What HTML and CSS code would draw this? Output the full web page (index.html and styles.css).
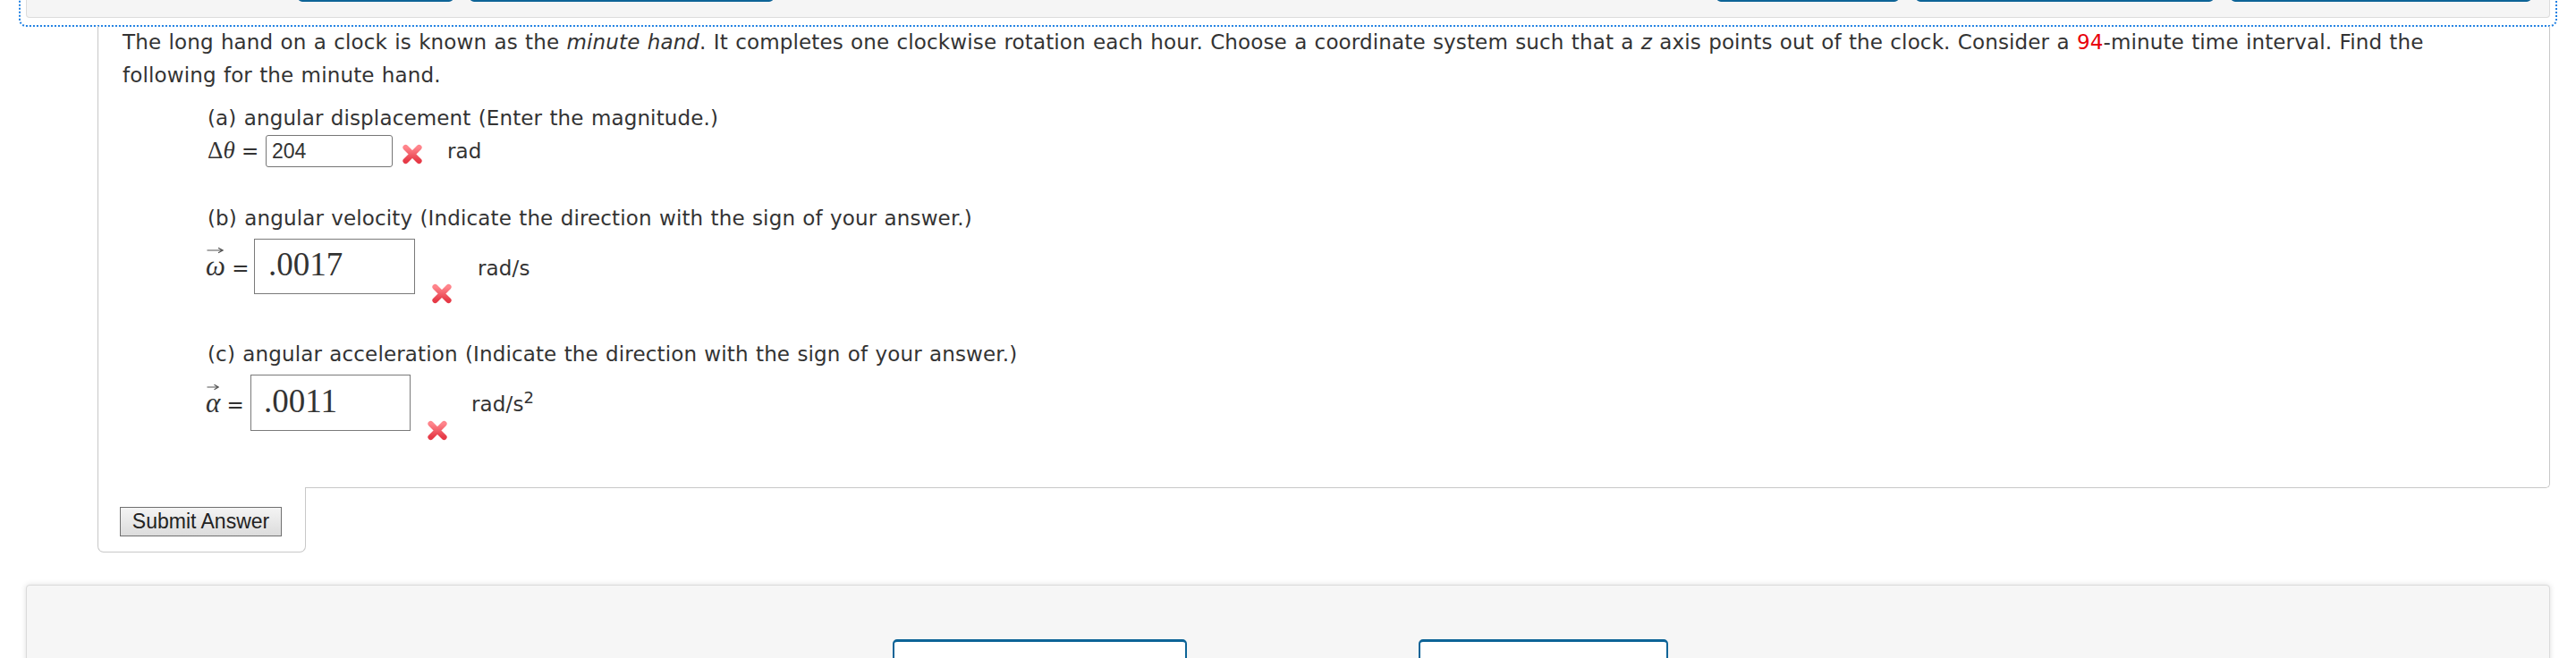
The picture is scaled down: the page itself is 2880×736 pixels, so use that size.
FILE: index.html
```html
<!DOCTYPE html>
<html lang="en">
<head>
<meta charset="utf-8">
<title>Minute hand question</title>
<link rel="stylesheet" href="styles.css">
</head>
<body>
<div class="page">
  <div class="focus-wrap">
    <div class="toolbar">
      <div class="tb-group tb-left">
        <span class="tb-btn w174"></span>
        <span class="tb-btn w340"></span>
      </div>
      <div class="tb-group tb-right">
        <span class="tb-btn w204"></span>
        <span class="tb-btn w333"></span>
        <span class="tb-btn w336"></span>
      </div>
    </div>
  </div>

  <div class="card">
    <p class="stem">The long hand on a clock is known as the <i>minute hand</i>. It completes one clockwise rotation each hour. Choose a coordinate system such that a <i>z</i> axis points out of the clock. Consider a <span class="red">94</span>-minute time interval. Find the following for the minute hand.</p>

    <div class="parts">
      <div class="part part-a">
        <div class="part-label">(a) angular displacement (Enter the magnitude.)</div>
        <div class="row row-a">
          <span class="lab lab-a"><span class="math"><span class="up">Δ</span><i>θ</i></span> =</span>
          <span class="inp inp-a">204</span>
          <svg class="xmark xm-a" viewBox="0 0 24 23" width="24" height="23" aria-hidden="true">
            <defs><linearGradient id="xg1" x1="0" y1="0" x2="0" y2="1"><stop offset="0" stop-color="#ff858c"/><stop offset="1" stop-color="#e63a47"/></linearGradient></defs>
            <path d="M4.5 4 L19.5 19 M19.5 4 L4.5 19" stroke="url(#xg1)" stroke-width="6.2" stroke-linecap="round"/>
          </svg>
          <span class="unit unit-a">rad</span>
        </div>
      </div>

      <div class="part part-b">
        <div class="part-label">(b) angular velocity (Indicate the direction with the sign of your answer.)</div>
        <div class="row row-b">
          <span class="lab lab-b"><span class="vec"><svg class="arrow arrow-w" viewBox="0 0 19 8" width="19" height="8" aria-hidden="true"><path d="M0.5 4 H17 M13 1.2 L18 4 L13 6.8" stroke="#555" stroke-width="1.2" fill="none"/></svg><i class="sym">ω</i></span> =</span>
          <span class="inp inp-b">.0017</span>
          <svg class="xmark xm-b" viewBox="0 0 24 23" width="24" height="23" aria-hidden="true">
            <defs><linearGradient id="xg2" x1="0" y1="0" x2="0" y2="1"><stop offset="0" stop-color="#ff858c"/><stop offset="1" stop-color="#e63a47"/></linearGradient></defs>
            <path d="M4.5 4 L19.5 19 M19.5 4 L4.5 19" stroke="url(#xg2)" stroke-width="6.2" stroke-linecap="round"/>
          </svg>
          <span class="unit unit-b">rad/s</span>
        </div>
      </div>

      <div class="part part-c">
        <div class="part-label">(c) angular acceleration (Indicate the direction with the sign of your answer.)</div>
        <div class="row row-c">
          <span class="lab lab-c"><span class="vec"><svg class="arrow arrow-a" viewBox="0 0 14 8" width="14" height="8" aria-hidden="true"><path d="M0.5 4 H12 M8.5 1.2 L13.2 4 L8.5 6.8" stroke="#555" stroke-width="1.2" fill="none"/></svg><i class="sym">α</i></span> =</span>
          <span class="inp inp-c">.0011</span>
          <svg class="xmark xm-c" viewBox="0 0 24 23" width="24" height="23" aria-hidden="true">
            <defs><linearGradient id="xg3" x1="0" y1="0" x2="0" y2="1"><stop offset="0" stop-color="#ff858c"/><stop offset="1" stop-color="#e63a47"/></linearGradient></defs>
            <path d="M4.5 4 L19.5 19 M19.5 4 L4.5 19" stroke="url(#xg3)" stroke-width="6.2" stroke-linecap="round"/>
          </svg>
          <span class="unit unit-c">rad/s<sup>2</sup></span>
        </div>
      </div>
    </div>
  </div>

  <div class="tab">
    <button class="submit" type="button">Submit Answer</button>
  </div>

  <div class="bottom-box">
    <span class="bb-btn bb1"></span>
    <span class="bb-btn bb2"></span>
  </div>
</div>
</body>
</html>
```

FILE: styles.css
```css
* { box-sizing: border-box; }

html, body {
  margin: 0;
  padding: 0;
  background: #ffffff;
  overflow: hidden;
}

body {
  font-family: "DejaVu Sans", Verdana, sans-serif;
  font-size: 23px;
  color: #333333;
}

.page {
  margin: 0 29px;
}

/* ---------- top toolbar with focus outline ---------- */
.focus-wrap {
  margin: -52px -8px 0;
  padding: 0 6px 8px;
  border: 2px dotted #1f80e2;
  border-radius: 0 0 8px 8px;
}

.toolbar {
  height: 70px;
  background: #f5f5f5;
  border: 1px solid #dcdcdc;
  border-top: none;
  border-radius: 0 0 4px 4px;
  display: flex;
  justify-content: space-between;
  padding: 0 20px 0 303px;
}

.tb-group {
  display: flex;
  align-items: flex-start;
}

.tb-left { gap: 18px; }
.tb-right { gap: 19px; }

.tb-btn {
  display: block;
  height: 40px;
  margin-top: 12px;
  background: #0d6497;
  border-radius: 5px;
}

.w174 { width: 174px; }
.w340 { width: 340px; }
.w204 { width: 204px; }
.w333 { width: 333px; }
.w336 { width: 336px; }

/* ---------- question card ---------- */
.card {
  margin: -1px 0 0 80px;
  border: 1px solid #c8c8c8;
  border-top: none;
  border-radius: 0 0 5px 0;
  padding: 0 60px 52px 27px;
  line-height: 36.8px;
  letter-spacing: 0.14px;
  word-spacing: 0.8px;
}

.stem {
  margin: 0;
}

.red { color: #e8000b; }

.parts {
  padding-left: 95px;
}

.part-a { margin-top: 11px; }
.part-b { margin-top: 37.5px; }
.part-c { margin-top: 37.7px; }

.part-label {
  line-height: 36.8px;
  white-space: nowrap;
}

.row {
  display: flex;
  align-items: flex-start;
  letter-spacing: 0;
  word-spacing: 0;
}

.row-a { margin-top: 1px; }
.row-b { margin-top: 4.5px; }
.row-c { margin-top: 4.5px; }

.lab {
  display: block;
  line-height: 36.8px;
  white-space: nowrap;
}

.lab-a { width: 65px; }
.lab-b { width: 54px; margin-top: 14.7px; margin-left: -2px; }
.lab-c { width: 50px; margin-top: 15.7px; margin-left: -2px; }

.math {
  font-family: "Liberation Serif", "Times New Roman", serif;
  font-size: 27px;
  line-height: 1;
}

.math .up { font-style: normal; }

.vec {
  position: relative;
  display: inline-block;
}

.sym {
  font-family: "Liberation Serif", "Times New Roman", serif;
  font-size: 31px;
  line-height: 1;
}

.arrow {
  position: absolute;
  left: 1px;
  top: -6px;
  display: block;
}

.inp {
  display: block;
  color: #333;
  background: #fff;
  white-space: nowrap;
}

.inp-a {
  width: 142px;
  height: 36px;
  border: 1px solid #767676;
  border-radius: 3px;
  font-family: "Liberation Sans", Arial, sans-serif;
  font-size: 23px;
  line-height: 34px;
  padding-left: 6px;
}

.inp-b,
.inp-c {
  border: 1px solid #7a7a7a;
  font-family: "Liberation Serif", "Times New Roman", serif;
  font-size: 37px;
}

.inp-b {
  width: 180px;
  height: 62px;
  line-height: 56px;
  padding-left: 15px;
}

.inp-c {
  width: 179px;
  height: 63px;
  line-height: 57px;
  padding-left: 14px;
}

.xmark { display: block; flex: none; }

.xm-a { margin: 10px 0 0 10px; }
.xm-b { margin: 50px 0 0 18px; }
.xm-c { margin: 51px 0 0 18px; }

.unit {
  display: block;
  line-height: 36.8px;
  white-space: nowrap;
  letter-spacing: 0.14px;
}

.unit-a { margin-left: 27px; }
.unit-b { margin: 14.7px 0 0 28px; }
.unit-c { margin: 14.7px 0 0 26px; }

.unit sup {
  font-size: 18px;
  line-height: 0;
  vertical-align: 9px;
}

/* ---------- submit tab ---------- */
.tab {
  margin: -1px 0 0 80px;
  width: 233px;
  background: #fff;
  border: 1px solid #c8c8c8;
  border-top: none;
  border-radius: 0 0 7px 7px;
  padding: 22px 0 17px 24px;
}

.submit {
  display: block;
  width: 181px;
  height: 33px;
  margin: 0;
  padding: 0;
  border: 1px solid #707070;
  border-radius: 0;
  background: linear-gradient(#f4f4f4, #dcdcdc);
  font-family: "Liberation Sans", Arial, sans-serif;
  font-size: 23px;
  line-height: 31px;
  color: #222;
  text-align: center;
}

/* ---------- bottom grey box ---------- */
.bottom-box {
  margin-top: 36px;
  height: 200px;
  background: #f6f6f6;
  border: 1px solid #dadada;
  border-radius: 4px 4px 0 0;
  box-shadow: 0 0 6px rgba(0, 0, 0, 0.13);
  display: flex;
  align-items: flex-start;
  gap: 259px;
  padding: 60px 0 0 968px;
}

.bb-btn {
  display: block;
  height: 60px;
  background: #fff;
  border: 2px solid #0d6497;
  border-top-width: 3px;
  border-radius: 5px 5px 0 0;
}

.bb1 { width: 329px; }
.bb2 { width: 279px; }
```
